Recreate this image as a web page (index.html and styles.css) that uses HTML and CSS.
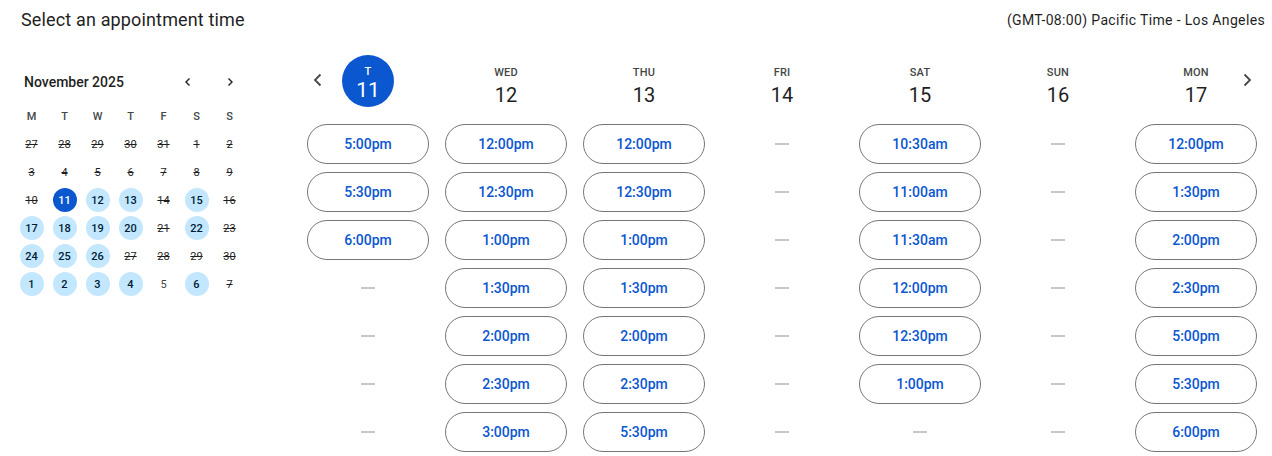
FILE: index.html
```html
<!DOCTYPE html>
<html lang="en">
<head>
<meta charset="utf-8">
<title>Select an appointment time</title>
<link rel="stylesheet" href="styles.css">
</head>
<body>
<div class="page">
  <header class="top">
    <h1 class="title">Select an appointment time</h1>
    <div class="tz">(GMT-08:00) Pacific Time - Los Angeles</div>
  </header>
  <main class="main">
    <section class="mini">
      <div class="mini-head">
        <div class="month">November 2025</div>
        <div class="mini-nav">
          <button class="mini-btn" aria-label="Previous month"><svg width="10" height="10" viewBox="0 0 10 10"><path d="M6.5 1.5 3 5l3.5 3.5" fill="none" stroke="#1f1f1f" stroke-width="1.4"/></svg></button>
          <button class="mini-btn" aria-label="Next month"><svg width="10" height="10" viewBox="0 0 10 10"><path d="M3.5 1.5 7 5 3.5 8.5" fill="none" stroke="#1f1f1f" stroke-width="1.4"/></svg></button>
        </div>
      </div>
      <div class="mgrid">
        <div class="wd">M</div><div class="wd">T</div><div class="wd">W</div><div class="wd">T</div><div class="wd">F</div><div class="wd">S</div><div class="wd">S</div>

        <div class="d"><span class="n off">27</span></div><div class="d"><span class="n off">28</span></div><div class="d"><span class="n off">29</span></div><div class="d"><span class="n off">30</span></div><div class="d"><span class="n off">31</span></div><div class="d"><span class="n off">1</span></div><div class="d"><span class="n off">2</span></div>

        <div class="d"><span class="n off">3</span></div><div class="d"><span class="n off">4</span></div><div class="d"><span class="n off">5</span></div><div class="d"><span class="n off">6</span></div><div class="d"><span class="n off">7</span></div><div class="d"><span class="n off">8</span></div><div class="d"><span class="n off">9</span></div>

        <div class="d"><span class="n off">10</span></div><div class="d"><span class="n sel">11</span></div><div class="d"><span class="n av">12</span></div><div class="d"><span class="n av">13</span></div><div class="d"><span class="n off">14</span></div><div class="d"><span class="n av">15</span></div><div class="d"><span class="n off">16</span></div>

        <div class="d"><span class="n av">17</span></div><div class="d"><span class="n av">18</span></div><div class="d"><span class="n av">19</span></div><div class="d"><span class="n av">20</span></div><div class="d"><span class="n off">21</span></div><div class="d"><span class="n av">22</span></div><div class="d"><span class="n off">23</span></div>

        <div class="d"><span class="n av">24</span></div><div class="d"><span class="n av">25</span></div><div class="d"><span class="n av">26</span></div><div class="d"><span class="n off">27</span></div><div class="d"><span class="n off">28</span></div><div class="d"><span class="n off">29</span></div><div class="d"><span class="n off">30</span></div>

        <div class="d"><span class="n av">1</span></div><div class="d"><span class="n av">2</span></div><div class="d"><span class="n av">3</span></div><div class="d"><span class="n av">4</span></div><div class="d"><span class="n plain">5</span></div><div class="d"><span class="n av">6</span></div><div class="d"><span class="n off">7</span></div>
      </div>
    </section>

    <section class="week">
      <button class="wk-btn wk-prev" aria-label="Previous week"><svg width="14" height="14" viewBox="0 0 14 14"><path d="M9.5 1.5 4 7l5.5 5.5" fill="none" stroke="#444746" stroke-width="1.8"/></svg></button>
      <button class="wk-btn wk-next" aria-label="Next week"><svg width="14" height="14" viewBox="0 0 14 14"><path d="M4.5 1.5 10 7l-5.5 5.5" fill="none" stroke="#444746" stroke-width="1.8"/></svg></button>

      <div class="col">
        <div class="dh selected"><span class="dl">T</span><span class="dn">11</span></div>
        <button class="slot">5:00pm</button>
        <button class="slot">5:30pm</button>
        <button class="slot">6:00pm</button>
        <div class="none"></div>
        <div class="none"></div>
        <div class="none"></div>
        <div class="none"></div>
      </div>

      <div class="col">
        <div class="dh"><span class="dl">WED</span><span class="dn">12</span></div>
        <button class="slot">12:00pm</button>
        <button class="slot">12:30pm</button>
        <button class="slot">1:00pm</button>
        <button class="slot">1:30pm</button>
        <button class="slot">2:00pm</button>
        <button class="slot">2:30pm</button>
        <button class="slot">3:00pm</button>
      </div>

      <div class="col">
        <div class="dh"><span class="dl">THU</span><span class="dn">13</span></div>
        <button class="slot">12:00pm</button>
        <button class="slot">12:30pm</button>
        <button class="slot">1:00pm</button>
        <button class="slot">1:30pm</button>
        <button class="slot">2:00pm</button>
        <button class="slot">2:30pm</button>
        <button class="slot">5:30pm</button>
      </div>

      <div class="col">
        <div class="dh"><span class="dl">FRI</span><span class="dn">14</span></div>
        <div class="none"></div>
        <div class="none"></div>
        <div class="none"></div>
        <div class="none"></div>
        <div class="none"></div>
        <div class="none"></div>
        <div class="none"></div>
      </div>

      <div class="col">
        <div class="dh"><span class="dl">SAT</span><span class="dn">15</span></div>
        <button class="slot">10:30am</button>
        <button class="slot">11:00am</button>
        <button class="slot">11:30am</button>
        <button class="slot">12:00pm</button>
        <button class="slot">12:30pm</button>
        <button class="slot">1:00pm</button>
        <div class="none"></div>
      </div>

      <div class="col">
        <div class="dh"><span class="dl">SUN</span><span class="dn">16</span></div>
        <div class="none"></div>
        <div class="none"></div>
        <div class="none"></div>
        <div class="none"></div>
        <div class="none"></div>
        <div class="none"></div>
        <div class="none"></div>
      </div>

      <div class="col">
        <div class="dh"><span class="dl">MON</span><span class="dn">17</span></div>
        <button class="slot">12:00pm</button>
        <button class="slot">1:30pm</button>
        <button class="slot">2:00pm</button>
        <button class="slot">2:30pm</button>
        <button class="slot">5:00pm</button>
        <button class="slot">5:30pm</button>
        <button class="slot">6:00pm</button>
      </div>
    </section>
  </main>
</div>
</body>
</html>
```

FILE: styles.css
```css
* { box-sizing: border-box; }

html, body {
  margin: 0;
  padding: 0;
  background: #ffffff;
  overflow: hidden;
}

body {
  font-family: Roboto, "Noto Sans", Arial, sans-serif;
  color: #1f1f1f;
}

.page {
  width: 1272px;
  height: 456px;
  padding: 0 7px 0 15px;
}

.top {
  height: 40px;
  display: flex;
  align-items: center;
  justify-content: space-between;
  padding-left: 6px;
}

.title {
  margin: 0;
  font-size: 18px;
  font-weight: 400;
  line-height: 24px;
  letter-spacing: 0.15px;
  color: #1f1f1f;
}

.tz {
  font-size: 14px;
  line-height: 20px;
  letter-spacing: 0.35px;
  color: #1f1f1f;
}

.main {
  display: flex;
  gap: 53px;
  align-items: flex-start;
}

/* mini calendar */
.mini {
  width: 231px;
  flex: none;
  padding-top: 30px;
}

.mini-head {
  display: flex;
  align-items: center;
  justify-content: space-between;
  height: 24px;
  padding-left: 9px;
  padding-right: 2px;
  margin-bottom: 8px;
}

.month {
  font-size: 14px;
  font-weight: 500;
  line-height: 24px;
  color: #1f1f1f;
}

.mini-nav {
  display: flex;
  gap: 14px;
}

.mini-btn {
  width: 28px;
  height: 24px;
  border: 0;
  padding: 0;
  background: transparent;
  display: flex;
  align-items: center;
  justify-content: center;
}

.mgrid {
  display: grid;
  grid-template-columns: repeat(7, 33px);
  grid-auto-rows: 28px;
}

.wd {
  display: flex;
  align-items: center;
  justify-content: center;
  font-size: 11px;
  font-weight: 500;
  color: #444746;
}

.d {
  display: flex;
  align-items: center;
  justify-content: center;
}

.n {
  width: 24px;
  height: 24px;
  border-radius: 50%;
  display: flex;
  align-items: center;
  justify-content: center;
  font-size: 11px;
  font-weight: 500;
  color: #1f1f1f;
}

.n.off { text-decoration: line-through; font-weight: 400; }
.n.plain { color: #444746; font-weight: 400; }
.n.av { background: #c2e7ff; color: #001d35; }
.n.sel { background: #0b57d0; color: #ffffff; }

/* week view */
.week {
  position: relative;
  display: flex;
  padding-top: 15px;
}

.wk-btn {
  position: absolute;
  top: 28px;
  width: 24px;
  height: 24px;
  border: 0;
  padding: 0;
  background: transparent;
  display: flex;
  align-items: center;
  justify-content: center;
}

.wk-prev { left: 7px; }
.wk-next { right: 6px; }

.col {
  width: 138px;
  padding: 0 8px;
  display: flex;
  flex-direction: column;
  align-items: center;
  gap: 8px;
}

.dh {
  width: 52px;
  height: 52px;
  margin-bottom: 9px;
  display: flex;
  flex-direction: column;
  align-items: center;
  padding-top: 10px;
}

.dl {
  font-size: 11px;
  font-weight: 500;
  line-height: 16px;
  color: #444746;
  letter-spacing: 0.2px;
}

.dn {
  font-size: 20px;
  font-weight: 400;
  line-height: 28px;
  color: #1f1f1f;
}

.dh.selected {
  border-radius: 50%;
  background: #0b57d0;
  padding-top: 10px;
}

.dh.selected .dl,
.dh.selected .dn {
  color: #ffffff;
}

.dh.selected .dl { line-height: 14px; }
.dh.selected .dn { font-size: 21px; line-height: 22px; }

.slot {
  width: 122px;
  height: 40px;
  flex: none;
  border: 1px solid #747775;
  border-radius: 20px;
  background: #ffffff;
  color: #0b57d0;
  font-family: inherit;
  font-size: 14px;
  font-weight: 500;
  padding: 0;
}

.none {
  width: 122px;
  height: 40px;
  flex: none;
  display: flex;
  align-items: center;
  justify-content: center;
}

.none::before {
  content: "";
  width: 14px;
  height: 2px;
  background: #c4c7c5;
}
```
